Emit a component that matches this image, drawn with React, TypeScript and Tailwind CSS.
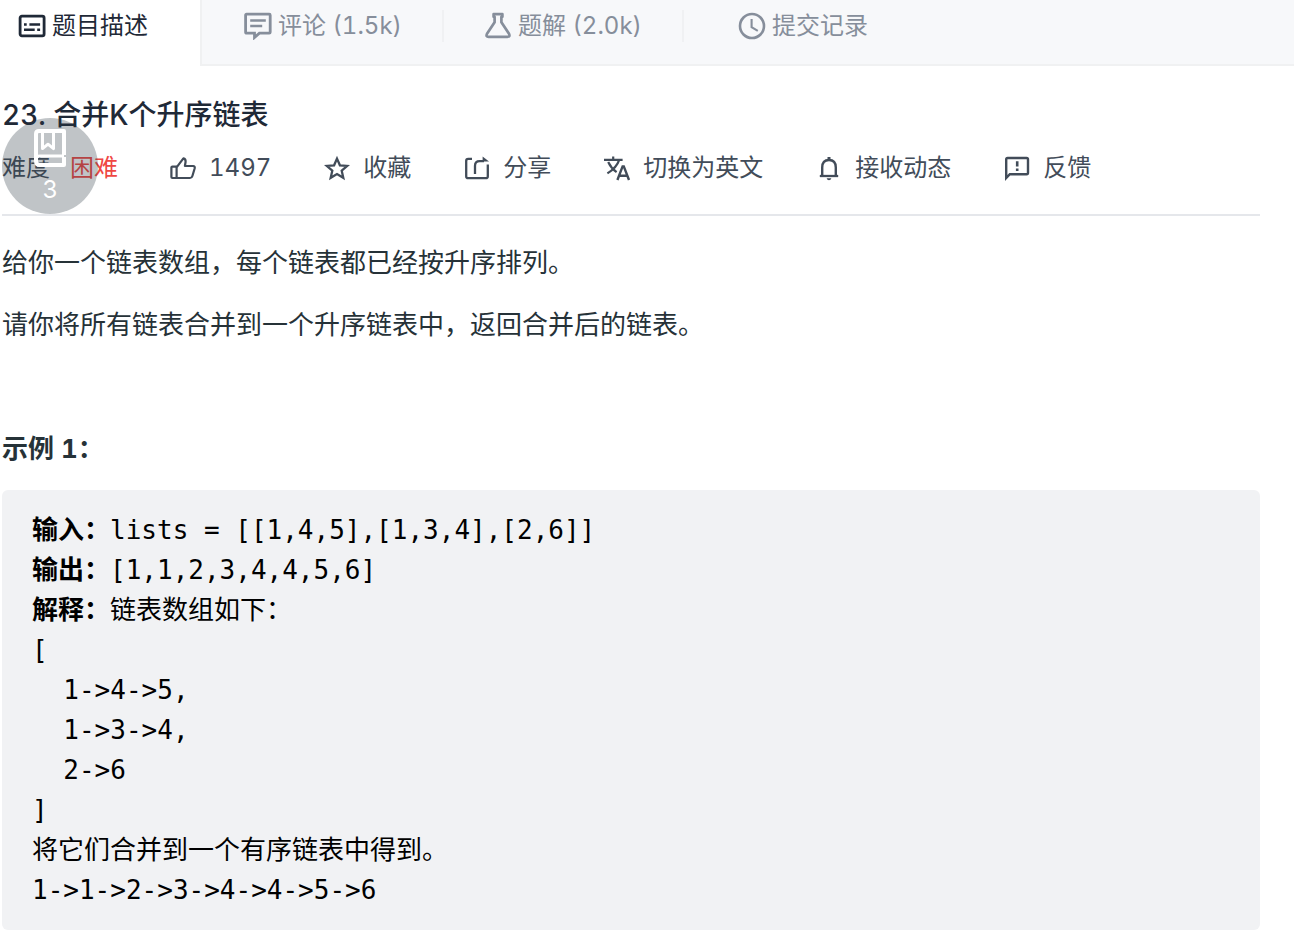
import type { ReactNode } from 'react';

const latin = "font-[Inter,'Noto_Sans_CJK_SC',sans-serif]";

type IconProps = { children: ReactNode };

function Icon({ children }: IconProps) {
  return (
    <svg
      viewBox="0 0 28 28"
      className="size-7 shrink-0"
      fill="none"
      stroke="currentColor"
      strokeWidth="2.5"
      aria-hidden="true"
    >
      {children}
    </svg>
  );
}

const DescriptionIcon = () => (
  <Icon>
    <rect x="2.1" y="4.2" width="24" height="19.6" rx="1.8" strokeWidth="2.8" />
    <path d="M6 12.4h2.7M11.4 12.4h10.7M6 17.8h10.7M19.2 17.8h2.9" />
  </Icon>
);

const CommentIcon = () => (
  <Icon>
    <path d="M2.6 2.2h22.6q1 0 1 1v17q0 1-1 1H15.4l-4.9 4.3v-4.3H2.6q-1 0-1-1v-17q0-1 1-1z" strokeWidth="2.8" />
    <path d="M6.2 8.6h15.6M6.2 14h12" />
  </Icon>
);

const FlaskIcon = () => (
  <Icon>
    <path d="M9.6 2.2h8.8v2.6h-1v5.4l7.6 11.6q1.4 3-1.6 3H4.6q-3 0-1.6-3l7.6-11.6V4.8h-1z" strokeLinejoin="round" strokeWidth="2.7" />
  </Icon>
);

const ClockIcon = () => (
  <Icon>
    <circle cx="14" cy="14" r="12" strokeWidth="2.6" />
    <path d="M13.6 7v8.2l6.2 3.6" strokeWidth="2.1" />
  </Icon>
);

const LikeIcon = () => (
  <Icon>
    <path d="M3.4 12.6H7.6V24H3.4q-1 0-1-1v-9.400q0-1 1-1zM7.600 13.400l6.800-9q2.400.6 2.200 3.400l-.7 4.200h8.200q2 .2 1.600 2.200L23.400 22q-.6 2-2.400 2H7.600" strokeWidth="2.2" strokeLinejoin="round" />
  </Icon>
);

const StarIcon = () => (
  <Icon>
    <path d="M14 4.600l2.900 6.700 7.300.6-5.500 4.800 1.600 7.100L14 20l-6.300 3.800 1.600-7.100-5.500-4.800 7.300-.6z" strokeWidth="2.3" />
  </Icon>
);

const ShareIcon = () => (
  <Icon>
    <path d="M9 4.800H5.200q-2 0-2 2v15.400q0 2 2 2h17.600q2 0 2-2V10.400" strokeWidth="2.300" />
    <path d="M12 20v-8.200q0-4.600 4.600-4.600H21" strokeWidth="2.300" />
    <path d="M19.600 2.600l6.400 5h-6.400z" fill="currentColor" stroke="none" />
  </Icon>
);

const TranslateIcon = () => (
  <Icon>
    <path d="M1 5.800h18.600M10.200 2.600v3.200M16.200 5.800q-2.400 7.600-11.800 13.600M5.200 8q3 6.400 8.400 10.200" strokeWidth="2.200" />
    <path d="M14.400 26l5.200-13.600h1.200L26 26M16.200 21.800h8" strokeWidth="2.400" />
  </Icon>
);

const BellIcon = () => (
  <Icon>
    <path d="M7.200 22v-8.400q0-7.600 6.800-7.600t6.800 7.600V22" strokeWidth="2.400" />
    <path d="M4.800 22h18.400" strokeWidth="2.300" />
    <path d="M14 3v3.400" strokeWidth="3" />
    <path d="M11.600 24.200h4.800q-.6 2-2.400 2t-2.400-2z" fill="currentColor" stroke="none" />
  </Icon>
);

const FeedbackIcon = () => (
  <Icon>
    <path d="M3.200 24V5.400q0-1.400 1.400-1.400h19q1.400 0 1.400 1.400v13.400q0 1.400-1.400 1.400H6.800z" strokeWidth="2.400" />
    <path d="M14.200 7.200v5.200M14.200 14.400v2.600" strokeWidth="2.600" />
  </Icon>
);

const actions = [
  { label: '收藏', icon: <StarIcon /> },
  { label: '分享', icon: <ShareIcon /> },
  { label: '切换为英文', icon: <TranslateIcon /> },
  { label: '接收动态', icon: <BellIcon /> },
  { label: '反馈', icon: <FeedbackIcon /> },
];

const example = [
  { term: '输入：', text: 'lists = [[1,4,5],[1,3,4],[2,6]]' },
  { term: '输出：', text: '[1,1,2,3,4,4,5,6]' },
  { term: '解释：', text: '链表数组如下：' },
  { text: '[' },
  { text: '  1->4->5,' },
  { text: '  1->3->4,' },
  { text: '  2->6' },
  { text: ']' },
  { text: '将它们合并到一个有序链表中得到。' },
  { text: '1->1->2->3->4->4->5->6' },
];

function Tabs() {
  return (
    <nav className="flex h-[66px] text-2xl leading-8 text-[#868e9b] tabular-nums">
      <a href="#description" aria-current="page" className="flex w-[200px] shrink-0 items-start gap-1.5 bg-white pt-2.5 pl-[18px] text-[#1f2937]">
        <span className="flex h-8 items-center"><DescriptionIcon /></span>
        题目描述
      </a>
      <div className="flex grow items-start border-b-2 border-l-2 border-[#f0f1f2] bg-[#f7f8fa] pt-2.5">
        <a href="#comments" className="flex w-[242px] shrink-0 items-center gap-1.5 border-r-2 border-[#f0f1f3] pl-[42px]">
          <CommentIcon />
          评论 (1.5k)
        </a>
        <a href="#solutions" className="flex w-60 shrink-0 items-center gap-1.5 border-r-2 border-[#f0f1f3] pl-10">
          <FlaskIcon />
          题解 (2.0k)
        </a>
        <a href="#submissions" className="flex items-center gap-1.5 pl-[54px]">
          <ClockIcon />
          提交记录
        </a>
      </div>
    </nav>
  );
}

function NotesBadge() {
  return (
    <button
      type="button"
      className="absolute top-[52px] left-0.5 flex size-24 flex-col items-center rounded-full bg-[#2d3c46]/30 pt-2.5 text-2xl leading-8 text-white"
    >
      <svg viewBox="0 0 34 40" className="h-10 w-[34px]" fill="none" stroke="currentColor" strokeWidth="4" strokeLinejoin="round" aria-hidden="true">
        <path d="M31 27V3H6Q3 3 3 6v27q0 4 4 4h24v-8" />
        <path d="M3 32q0-4 4-4h24" strokeWidth="3" />
        <path d="M9.500 3v17.600l5.500-4.400 5.500 4.400V3" strokeWidth="3" />
      </svg>
      <span className="mt-1.5">3</span>
    </button>
  );
}

function Header() {
  return (
    <header className="mr-[34px] ml-0.5 border-b-2 border-[#e5e7eb] pt-[31px] pb-[30px] tabular-nums">
      <h1 className="text-[28px] leading-9 font-medium text-[#1f2937]">23. 合并K个升序链表</h1>
      <div className="mt-[19px] flex h-8 items-center text-2xl leading-8 whitespace-nowrap text-[#424c59]">
        <span>难度</span>
        <span className="ml-5 text-[#ef4743]">困难</span>
        <div className="ml-[51px] flex items-center gap-[52px]">
          <button type="button" className="flex items-center gap-3"><LikeIcon />1497</button>
          {actions.map(({ label, icon }) => (
            <button key={label} type="button" className="flex items-center gap-3">
              {icon}
              {label}
            </button>
          ))}
        </div>
      </div>
    </header>
  );
}

function Description() {
  return (
    <article className="mr-[34px] ml-0.5 flex flex-col gap-5 pt-[26px] text-[26px] leading-[42px] text-[#263238] tabular-nums">
      <p>给你一个链表数组，每个链表都已经按升序排列。</p>
      <p>请你将所有链表合并到一个升序链表中，返回合并后的链表。</p>
      <p>&nbsp;</p>
      <p className="font-bold">示例 1：</p>
      <pre className="overflow-x-auto rounded-md bg-[#f1f2f4] px-[30px] py-5 font-['DejaVu_Sans_Mono','Noto_Sans_CJK_SC',monospace] leading-10 text-black">
        {example.map(({ term, text }) => (
          <span key={text} className="block h-10">
            {term && <strong>{term}</strong>}
            {text}
          </span>
        ))}
      </pre>
    </article>
  );
}

export default function App() {
  return (
    <div lang="zh-CN" className={`bg-white ${latin}`}>
      <Tabs />
      <main className="relative">
        <Header />
        <NotesBadge />
        <Description />
      </main>
    </div>
  );
}
